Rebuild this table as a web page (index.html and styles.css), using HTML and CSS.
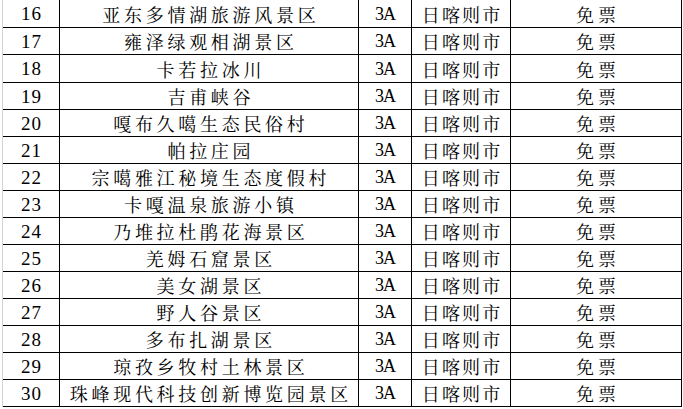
FILE: index.html
```html
<!DOCTYPE html>
<html lang="zh-CN">
<head>
<meta charset="utf-8">
<title>景区列表</title>
<link rel="stylesheet" href="styles.css">
</head>
<body>
<div class="sheet">
  <div class="row r-tall"><div class="c num">16</div><div class="c name">亚东多情湖旅游风景区</div><div class="c lvl">3A</div><div class="c city">日喀则市</div><div class="c fee">免票</div></div>
  <div class="row"><div class="c num">17</div><div class="c name">雍泽绿观相湖景区</div><div class="c lvl">3A</div><div class="c city">日喀则市</div><div class="c fee">免票</div></div>
  <div class="row r-tall"><div class="c num">18</div><div class="c name">卡若拉冰川</div><div class="c lvl">3A</div><div class="c city">日喀则市</div><div class="c fee">免票</div></div>
  <div class="row"><div class="c num">19</div><div class="c name">吉甫峡谷</div><div class="c lvl">3A</div><div class="c city">日喀则市</div><div class="c fee">免票</div></div>
  <div class="row"><div class="c num">20</div><div class="c name">嘎布久噶生态民俗村</div><div class="c lvl">3A</div><div class="c city">日喀则市</div><div class="c fee">免票</div></div>
  <div class="row"><div class="c num">21</div><div class="c name">帕拉庄园</div><div class="c lvl">3A</div><div class="c city">日喀则市</div><div class="c fee">免票</div></div>
  <div class="row"><div class="c num">22</div><div class="c name">宗噶雅江秘境生态度假村</div><div class="c lvl">3A</div><div class="c city">日喀则市</div><div class="c fee">免票</div></div>
  <div class="row"><div class="c num">23</div><div class="c name">卡嘎温泉旅游小镇</div><div class="c lvl">3A</div><div class="c city">日喀则市</div><div class="c fee">免票</div></div>
  <div class="row"><div class="c num">24</div><div class="c name">乃堆拉杜鹃花海景区</div><div class="c lvl">3A</div><div class="c city">日喀则市</div><div class="c fee">免票</div></div>
  <div class="row"><div class="c num">25</div><div class="c name">羌姆石窟景区</div><div class="c lvl">3A</div><div class="c city">日喀则市</div><div class="c fee">免票</div></div>
  <div class="row"><div class="c num">26</div><div class="c name">美女湖景区</div><div class="c lvl">3A</div><div class="c city">日喀则市</div><div class="c fee">免票</div></div>
  <div class="row"><div class="c num">27</div><div class="c name">野人谷景区</div><div class="c lvl">3A</div><div class="c city">日喀则市</div><div class="c fee">免票</div></div>
  <div class="row"><div class="c num">28</div><div class="c name">多布扎湖景区</div><div class="c lvl">3A</div><div class="c city">日喀则市</div><div class="c fee">免票</div></div>
  <div class="row"><div class="c num">29</div><div class="c name">琼孜乡牧村土林景区</div><div class="c lvl">3A</div><div class="c city">日喀则市</div><div class="c fee">免票</div></div>
  <div class="row"><div class="c num">30</div><div class="c name">珠峰现代科技创新博览园景区</div><div class="c lvl">3A</div><div class="c city">日喀则市</div><div class="c fee">免票</div></div>
</div>
</body>
</html>
```
FILE: styles.css
```css
html, body {
  margin: 0;
  padding: 0;
  background: #ffffff;
}
body {
  width: 683px;
  height: 409px;
  overflow: hidden;
  font-family: "Noto Serif CJK SC", "Noto Sans CJK SC", sans-serif;
  color: #000;
}
.sheet {
  margin-left: 2px;
  width: 680px;
  border-left: 1px solid #d4d4d4;
  display: flex;
  flex-direction: column;
}
.row {
  display: grid;
  grid-template-columns: 57px 299px 53px 99px 171px;
  height: 27px;
}
.row.r-tall {
  height: 28px;
}
.c {
  box-sizing: border-box;
  border-right: 1px solid #000;
  border-bottom: 1px solid #000;
  display: flex;
  align-items: center;
  justify-content: center;
  white-space: nowrap;
  font-size: 18px;
  line-height: 1;
}
.c.num {
  font-family: "Liberation Serif", serif;
  font-size: 19px;
  letter-spacing: 1px;
  padding-left: 1px;
}
.c.name {
  letter-spacing: 3.7px;
  padding-left: 3.7px;
}
.c.lvl {
  font-family: "Liberation Serif", serif;
  font-size: 18px;
  letter-spacing: -1px;
  padding-left: 0;
}
.c.city {
  letter-spacing: 2.2px;
  padding-left: 2.2px;
}
.c.fee {
  letter-spacing: 4px;
  padding-left: 4px;
}
```
